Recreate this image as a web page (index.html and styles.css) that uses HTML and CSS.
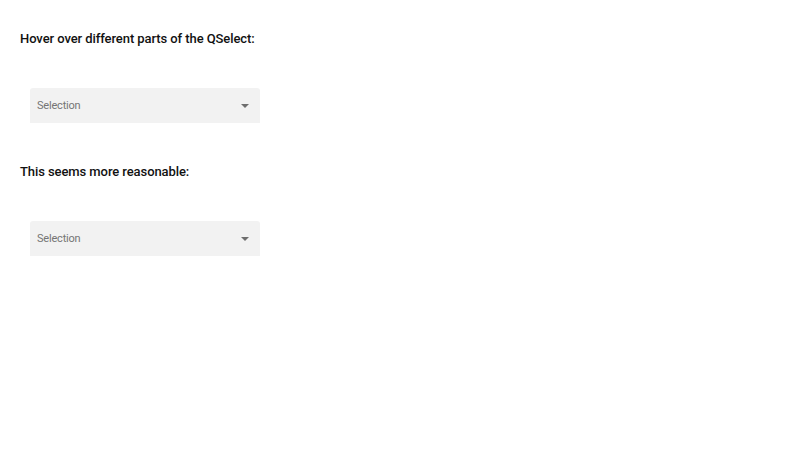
FILE: index.html
```html
<!DOCTYPE html>
<html lang="en">
<head>
  <meta charset="UTF-8" />
  <title>QSelect</title>
  <link rel="stylesheet" href="styles.css">
</head>
<body>
  <div class="page">
    <div class="section">
      <div class="title">Hover over different parts of the QSelect:</div>
      <div class="select">
        <span class="label">Selection</span>
        <span class="arrow"></span>
      </div>
    </div>
    <div class="section">
      <div class="title">This seems more reasonable:</div>
      <div class="select">
        <span class="label">Selection</span>
        <span class="arrow"></span>
      </div>
    </div>
  </div>
</body>
</html>
```

FILE: styles.css
```css
body {
  margin: 0;
  background: #fff;
  font-family: Roboto, "Liberation Sans", sans-serif;
  color: #000;
}

.page {
  padding: 29px 20px;
}

.section {
  margin-bottom: 39px;
}

.title {
  font-size: 13px;
  font-weight: 500;
  line-height: 20px;
  letter-spacing: -0.08px;
  margin-bottom: 39px;
  color: #111;
}

.select {
  width: 230px;
  height: 35px;
  margin-left: 10px;
  background: #f2f2f2;
  border-radius: 3px 3px 0 0;
  display: flex;
  align-items: center;
  justify-content: space-between;
  padding: 0 11px 0 7px;
  box-sizing: border-box;
}

.label {
  font-size: 11px;
  letter-spacing: -0.2px;
  color: #757575;
}

.arrow {
  width: 0;
  height: 0;
  border-left: 4px solid transparent;
  border-right: 4px solid transparent;
  border-top: 4px solid #6e6e6e;
}
```
